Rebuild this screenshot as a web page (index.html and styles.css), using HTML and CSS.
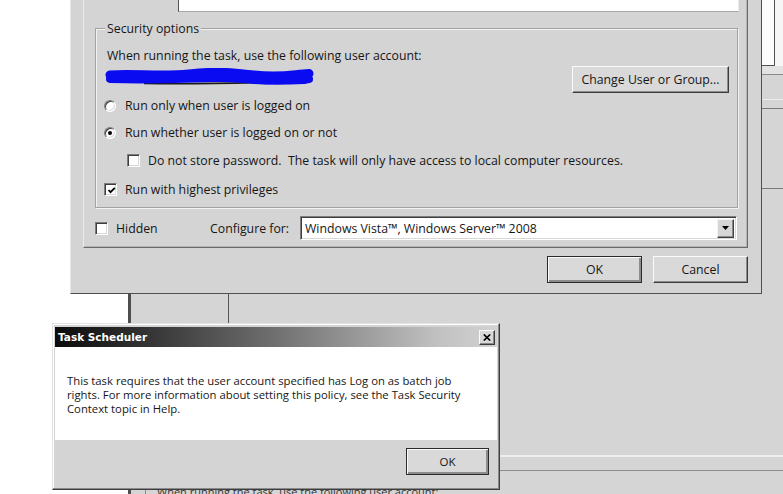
FILE: index.html
```html
<!DOCTYPE html>
<html>
<head>
<meta charset="utf-8">
<title>Task Scheduler</title>
<link rel="stylesheet" href="styles.css">
</head>
<body>
<div class="desktop">

  <div class="bgwin">
    <div class="bg-top"><div class="bg-top-pane"></div><div class="bg-top-rest"></div></div>
    <div class="bg-band b2"></div>
    <div class="bg-band b3"></div>
    <div class="bg-band b4"></div>
    <div class="bg-body"><div class="bg-side"></div><div class="bg-main"></div></div>
    <div class="bg-strip s1"></div>
    <div class="bg-strip s2"></div>
    <div class="bg-bottom"><div class="bg-bottom-inner">When running the task, use the following user account:</div></div>
  </div>

  <div class="props">
    <div class="tabpanel">
      <div class="desc-row"><div class="desc-box"></div></div>
      <fieldset class="group">
        <legend>Security options</legend>
        <div class="line">When running the task, use the following user account:</div>
        <div class="account-row">
          <svg class="scribble" width="212" height="18" viewBox="0 0 212 18">
            <path d="M40 15.5 C 90 16.5, 150 15, 205 13" stroke="#1a1a1a" stroke-width="1.6" fill="none"/>
            <path d="M6 7 C 30 5, 55 9, 85 6 S 120 4, 150 7 S 190 6, 205 5.5" stroke="#0b0bf2" stroke-width="9" stroke-linecap="round" fill="none"/>
            <path d="M6 11 C 40 12, 80 11, 110 10 S 140 13, 170 12 S 195 13, 205 11" stroke="#0b0bf2" stroke-width="8" stroke-linecap="round" fill="none"/>
            <path d="M150 13 C 165 14, 180 14, 200 13" stroke="#0b0bf2" stroke-width="6" stroke-linecap="round" fill="none"/>
          </svg>
          <div class="btn btn-change">Change User or Group...</div>
        </div>
        <div class="opt o1"><span class="radio"></span><span>Run only when user is logged on</span></div>
        <div class="opt"><span class="radio on"></span><span>Run whether user is logged on or not</span></div>
        <div class="opt indent"><span class="check"></span><span>Do not store password.&nbsp; The task will only have access to local computer resources.</span></div>
        <div class="opt o4"><span class="check"><svg width="9" height="9" viewBox="0 0 9 9"><polyline points="1.5,4 3.5,6.2 7.8,1.8" fill="none" stroke="#000" stroke-width="1.8"/></svg></span><span>Run with highest privileges</span></div>
      </fieldset>
      <div class="config-row">
        <div class="opt"><span class="check"></span><span>Hidden</span></div>
        <span class="config-label">Configure for:</span>
        <div class="combo">
          <span class="combo-text">Windows Vista™, Windows Server™ 2008</span>
          <span class="combo-btn"><svg width="7" height="4" viewBox="0 0 7 4"><polygon points="0,0 7,0 3.5,4" fill="#000"/></svg></span>
        </div>
      </div>
    </div>
    <div class="props-footer">
      <div class="btn btn-wide btn-default">OK</div>
      <div class="btn btn-wide">Cancel</div>
    </div>
  </div>

  <div class="msgbox">
    <div class="titlebar">
      <span class="title">Task Scheduler</span>
      <span class="close"><svg width="8" height="7" viewBox="0 0 8 7"><path d="M0.8 0.5 L7.2 6.5 M7.2 0.5 L0.8 6.5" stroke="#000" stroke-width="1.7"/></svg></span>
    </div>
    <div class="msg-body">This task requires that the user account specified has Log on as batch job<br>rights. For more information about setting this policy, see the Task Security<br>Context topic in Help.</div>
    <div class="msg-footer"><div class="btn btn-msg btn-default">OK</div></div>
  </div>

</div>
</body>
</html>
```

FILE: styles.css
```css
* { box-sizing: border-box; }
html, body { margin: 0; padding: 0; }
body {
  width: 783px; height: 494px; overflow: hidden; background: #fff;
  font-family: "Open Sans", "Noto Sans", sans-serif; font-size: 12.3px; color: #161616;
}
.desktop { position: relative; width: 783px; height: 494px; overflow: hidden; background: #fff; }

/* background window */
.bgwin {
  position: absolute; left: 128px; top: 0; right: 0; bottom: 0;
  background: #d5d5d5; border-left: 3px solid #4e4e4e;
  display: flex; flex-direction: column;
}
.bg-top { height: 75px; flex: none; display: flex; border-bottom: 1px solid #8a8a8a; background: #e2e2e2; }
.bg-top-pane { flex: 1; height: 66px; background: #fcfcfc; border-right: 1px solid #505050; border-bottom: 1px solid #505050; }
.bg-top-rest { width: 8px; height: 66px; background: #f6f6f6; }
.bg-band { flex: none; }
.b2 { height: 25px; border-bottom: 1px solid #ededed; }
.b3 { height: 9px; border-bottom: 1px solid #7a7a7a; }
.b4 { height: 80px; border-bottom: 1px solid #7a7a7a; }
.bg-body { flex: 1; display: flex; }
.bg-side { width: 98px; border-right: 1px solid #555; }
.bg-main { flex: 1; }
.s1 { flex: none; height: 2px; background: #eeeeee; }
.s2 { flex: none; height: 14px; border-bottom: 1px solid #8c8c8c; }
.bg-bottom { flex: none; height: 23px; padding-left: 14px; display: flex; }
.bg-bottom-inner { border-left: 1px solid #8a8a8a; padding: 14px 0 0 11px; font-size: 11px; line-height: 14px; color: #333; white-space: nowrap; }

/* properties dialog */
.props {
  position: absolute; left: 70px; top: -22px; width: 692px; height: 316px;
  background: #d4d4d4;
  border-left: 1px solid #e6e6e6; border-right: 1px solid #4f4f4f; border-bottom: 1px solid #4f4f4f;
  padding: 0 13px 0 12px;
  display: flex; flex-direction: column;
}
.tabpanel {
  border-left: 1px solid #ececec; border-right: 1px solid #6a6a6a; border-bottom: 1px solid #6a6a6a;
  box-shadow: inset -1px -1px 0 #b4b4b4;
  display: flex; flex-direction: column;
}
.desc-row { height: 34px; padding: 0 8px 0 94px; }
.desc-box { height: 34px; background: #fff; border-left: 1px solid #555; border-bottom: 1px solid #a8a8a8; border-right: 1px solid #e8e8e8; }

.group {
  margin: 9px 9px 0 11px; padding: 12px 8px 10px 8px; min-width: 0;
  border: 1px solid #a2a2a2; box-shadow: inset 1px 1px 0 #f2f2f2, 1px 1px 0 #f2f2f2;
}
.group legend { padding: 0 2px; margin-left: 1px; line-height: 15px; background: #d4d4d4; }
.line { height: 15px; line-height: 15px; padding-left: 3px; white-space: nowrap; }
.account-row { display: flex; justify-content: space-between; align-items: flex-start; margin-top: 3px; }
.scribble { margin: 2px 0 0 0; display: block; }

.opt { display: flex; align-items: center; height: 15px; line-height: 15px; white-space: nowrap; margin-top: 12px; }
.opt.o1 { margin-top: 5px; }
.opt.indent { padding-left: 23px; margin-top: 13px; }
.opt.o4 { margin-top: 14px; }

.radio {
  position: relative; flex: none; width: 12px; height: 12px; margin-right: 9px; border-radius: 50%;
  background: #fff; border: 1px solid; border-color: #7c7c7c #ffffff #ffffff #7c7c7c;
  box-shadow: inset 1px 1px 0 #3e3e3e, inset -1px -1px 0 #d8d8d8;
}
.radio.on::after {
  content: ""; position: absolute; left: 3px; top: 3px; width: 4px; height: 4px; border-radius: 50%; background: #000;
}
.check {
  flex: none; width: 13px; height: 13px; margin-right: 8px; background: #fff;
  border: 1px solid; border-color: #7c7c7c #ffffff #ffffff #7c7c7c;
  box-shadow: inset 1px 1px 0 #3e3e3e, inset -1px -1px 0 #d8d8d8;
  display: flex; align-items: center; justify-content: center; padding: 1px 0 0 1px;
}
.check svg { display: block; }

.config-row {
  display: grid; grid-template-columns: 115px 90px 1fr; align-items: center;
  margin: 8px 10px 0 11px; padding-bottom: 7px;
}
.config-row .opt { margin-top: 0; }
.config-label { white-space: nowrap; line-height: 15px; }
.combo {
  height: 24px; background: #fff; display: flex; align-items: center; justify-content: space-between;
  border: 1px solid; border-color: #7c7c7c #ffffff #ffffff #7c7c7c;
  box-shadow: inset 1px 1px 0 #3e3e3e, inset -1px -1px 0 #d8d8d8;
  padding: 2px 2px 2px 4px;
}
.combo-text { white-space: nowrap; line-height: 15px; }
.combo-btn {
  width: 17px; height: 19px; background: #d6d6d6; display: flex; align-items: center; justify-content: center;
  border: 1px solid; border-color: #f4f4f4 #404040 #404040 #f4f4f4; box-shadow: inset -1px -1px 0 #8a8a8a;
}
.combo-btn svg { display: block; }

.btn {
  background: #d9d9d9; display: flex; align-items: center; justify-content: center; white-space: nowrap;
  border: 1px solid; border-color: #fafafa #3c3c3c #3c3c3c #fafafa;
  box-shadow: inset -1px -1px 0 #8c8c8c;
  color: #161616;
}
.btn-change { width: 157px; height: 27px; }
.btn-default { border-color: #2a2a2a; box-shadow: inset 1px 1px 0 #fafafa, inset -2px -2px 0 #8c8c8c; }

.props-footer { display: flex; justify-content: flex-end; gap: 11px; margin-top: 8px; }
.btn-wide { width: 95px; height: 27px; }

/* message box */
.msgbox {
  position: absolute; left: 52px; top: 323px; width: 448px; height: 167px;
  background: #d4d4d4; padding: 3px 2px 2px 2px;
  border: 1px solid; border-color: #e2e2e2 #3e3e3e #3e3e3e #e2e2e2;
  box-shadow: inset -1px -1px 0 #8a8a8a, inset 1px 1px 0 #ffffff;
  display: flex; flex-direction: column;
}
.titlebar {
  height: 20px; flex: none; display: flex; align-items: center; justify-content: space-between;
  padding: 0 2px 0 3px;
  background: linear-gradient(90deg, #0c0c0c 0%, #1e1e1e 10%, #707070 50%, #c0c0c0 86%, #d2d2d2 100%);
}
.title { color: #fff; font-family: "DejaVu Sans", "Liberation Sans", sans-serif; font-weight: bold; font-size: 10.5px; }
.close {
  width: 16px; height: 15px; background: #d8d8d8; display: flex; align-items: center; justify-content: center;
  border: 1px solid; border-color: #fafafa #3a3a3a #3a3a3a #fafafa; box-shadow: inset -1px -1px 0 #8a8a8a;
}
.close svg { display: block; }
.msg-body {
  height: 93px; flex: none; background: #fff; padding: 27px 8px 0 12px;
  font-size: 11.3px; line-height: 14px; white-space: nowrap; color: #161616;
}
.msg-footer { flex: 1; display: flex; justify-content: flex-end; align-items: flex-start; padding: 8px 8px 0 0; }
.btn-msg { width: 83px; height: 27px; font-size: 11.5px; }
```
